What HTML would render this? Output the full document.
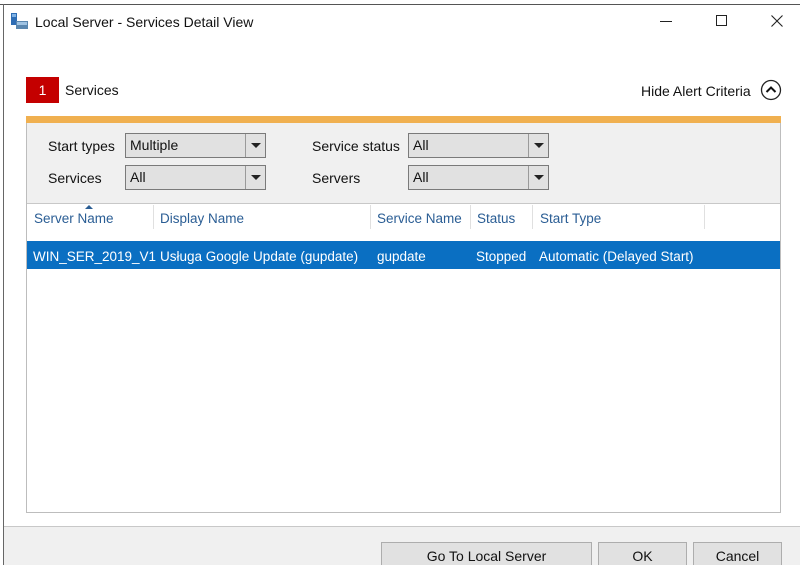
<!DOCTYPE html>
<html style="overflow:hidden"><head><style>
*{margin:0;padding:0;box-sizing:border-box}
html,body{width:800px;height:565px;overflow:hidden}
body{background:#fff;font-family:"Liberation Sans",sans-serif;font-size:14px;color:#111;position:relative}
.a{position:absolute}
.combo{position:absolute;height:25px;border:1px solid #7a7a7a;background:#e1e1e1;font-size:14px;padding:3px 4px}
.combo .btn{position:absolute;right:0;top:0;width:20px;height:23px;border-left:1px solid #9a9a9a}
.combo .btn:after{content:"";position:absolute;left:5px;top:9px;border-left:5px solid transparent;border-right:5px solid transparent;border-top:5px solid #222}
.hd{position:absolute;top:211px;color:#2a5d94;font-size:13.5px}
.sep{position:absolute;top:205px;width:1px;height:24px;background:#e0e0e0}
.row{position:absolute;top:249px;color:#fff;font-size:13.5px}
.b{position:absolute;top:542px;height:30px;border:1px solid #adadad;background:#e1e1e1;text-align:center;font-size:14px;padding-top:5px}
</style></head><body>
<div class="a" style="left:0;top:4px;width:800px;height:1px;background:#555"></div>
<div class="a" style="left:3px;top:4px;width:1px;height:561px;background:#666"></div>
<svg class="a" style="left:11px;top:13px" width="18" height="17"><rect x="0" y="0" width="6" height="12" fill="#2e6db4"/><rect x="1" y="1" width="4" height="3" fill="#7fb2e5"/><rect x="5" y="8" width="12" height="8" fill="#5a87b0"/><rect x="6" y="9" width="10" height="3" fill="#9fc3e3"/></svg>
<div class="a" style="left:35px;top:14px;font-size:14px">Local Server - Services Detail View</div>
<div class="a" style="left:660px;top:21px;width:12px;height:1px;background:#222"></div>
<div class="a" style="left:716px;top:15px;width:11px;height:11px;border:1px solid #222"></div>
<svg class="a" style="left:771px;top:15px" width="12" height="12"><path d="M0.5 0.5 L11.5 11.5 M11.5 0.5 L0.5 11.5" stroke="#222" stroke-width="1.1"/></svg>
<div class="a" style="left:26px;top:77px;width:33px;height:26px;background:#c40000;color:#fff;text-align:center;padding-top:5px;font-size:14px">1</div>
<div class="a" style="left:65px;top:82px">Services</div>
<div class="a" style="left:641px;top:83px">Hide Alert Criteria</div>
<svg class="a" style="left:760px;top:79px" width="22" height="22"><circle cx="11" cy="11" r="9.5" fill="none" stroke="#222" stroke-width="1.3"/><path d="M6.5 13 L11 8.5 L15.5 13" fill="none" stroke="#111" stroke-width="2"/></svg>
<div class="a" style="left:26px;top:116px;width:755px;height:397px;border:1px solid #bdbdbd;border-top:none"></div>
<div class="a" style="left:26px;top:116px;width:755px;height:7px;background:#f0b050"></div>
<div class="a" style="left:27px;top:123px;width:753px;height:81px;background:#f0f0f0;border-bottom:1px solid #c8c8c8"></div>
<div class="a" style="left:48px;top:138px">Start types</div>
<div class="combo" style="left:125px;top:133px;width:141px">Multiple<div class="btn"></div></div>
<div class="a" style="left:48px;top:170px">Services</div>
<div class="combo" style="left:125px;top:165px;width:141px">All<div class="btn"></div></div>
<div class="a" style="left:312px;top:138px">Service status</div>
<div class="combo" style="left:408px;top:133px;width:141px">All<div class="btn"></div></div>
<div class="a" style="left:312px;top:170px">Servers</div>
<div class="combo" style="left:408px;top:165px;width:141px">All<div class="btn"></div></div>
<div class="a" style="left:85px;top:205px;border-left:4px solid transparent;border-right:4px solid transparent;border-bottom:4px solid #2a5d94"></div>
<div class="hd" style="left:34px">Server Name</div>
<div class="sep" style="left:153px"></div>
<div class="hd" style="left:160px">Display Name</div>
<div class="sep" style="left:370px"></div>
<div class="hd" style="left:377px">Service Name</div>
<div class="sep" style="left:470px"></div>
<div class="hd" style="left:477px">Status</div>
<div class="sep" style="left:532px"></div>
<div class="hd" style="left:540px">Start Type</div>
<div class="sep" style="left:704px"></div>
<div class="a" style="left:27px;top:241px;width:753px;height:28px;background:#0a6fc2"></div>
<div class="row" style="left:33px">WIN_SER_2019_V1</div>
<div class="row" style="left:160px">Usługa Google Update (gupdate)</div>
<div class="row" style="left:377px">gupdate</div>
<div class="row" style="left:476px">Stopped</div>
<div class="row" style="left:539px">Automatic (Delayed Start)</div>
<div class="a" style="left:4px;top:526px;width:796px;height:39px;background:#f0f0f0;border-top:1px solid #c8c8c8"></div>
<div class="b" style="left:381px;width:211px">Go To Local Server</div>
<div class="b" style="left:598px;width:89px">OK</div>
<div class="b" style="left:693px;width:89px">Cancel</div>
</body></html>
